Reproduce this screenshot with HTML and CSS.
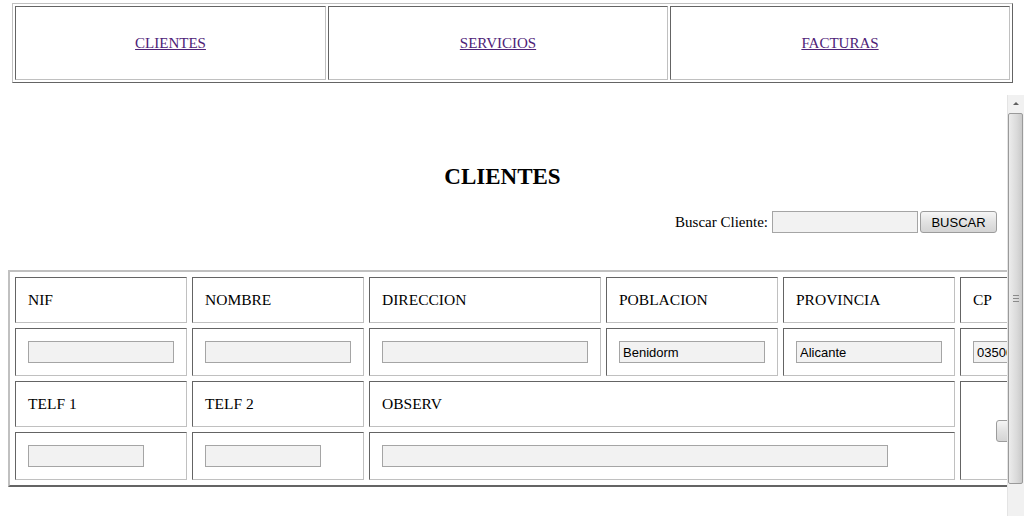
FILE: index.html
```html
<!doctype html>
<html lang="es">
<head>
    <meta charset="UTF-8">
    <title>Clientes</title>
    <link rel="stylesheet" href="styles.css">
</head>
<body>
<div class="menu-wrap">
    <table class="menu">
        <tr>
            <td class="menu-cell menu-first"><a href="#">CLIENTES</a></td>
            <td class="menu-cell"><a href="#">SERVICIOS</a></td>
            <td class="menu-cell"><a href="#">FACTURAS</a></td>
        </tr>
    </table>
</div>

<div class="frame">
    <div class="frame-content">
        <h2 class="title">CLIENTES</h2>

        <form class="search">
            <label for="buscar">Buscar Cliente:</label>
            <input type="text" id="buscar" class="field search-field">
            <input type="button" class="btn btn-buscar" value="BUSCAR">
        </form>

        <table class="data">
            <tr class="row-label">
                <td class="c-small">NIF</td>
                <td class="c-small">NOMBRE</td>
                <td class="c-wide">DIRECCION</td>
                <td class="c-small">POBLACION</td>
                <td class="c-prov">PROVINCIA</td>
                <td class="c-small">CP</td>
            </tr>
            <tr class="row-input">
                <td><input type="text" class="field"></td>
                <td><input type="text" class="field"></td>
                <td><input type="text" class="field field-wide"></td>
                <td><input type="text" class="field" value="Benidorm"></td>
                <td><input type="text" class="field" value="Alicante"></td>
                <td><input type="text" class="field" value="03500"></td>
            </tr>
            <tr class="row-label">
                <td>TELF 1</td>
                <td>TELF 2</td>
                <td colspan="3">OBSERV</td>
                <td rowspan="2" class="c-action"><input type="button" class="btn btn-guardar" value="GUARDAR"></td>
            </tr>
            <tr class="row-input">
                <td><input type="text" class="field field-telf"></td>
                <td><input type="text" class="field field-telf"></td>
                <td colspan="3"><input type="text" class="field field-obs"></td>
            </tr>
        </table>
    </div>

    <div class="scrollbar">
        <div class="sb-up"><span class="sb-arrow"></span></div>
        <div class="sb-thumb"><span class="sb-grip"></span></div>
        <div class="sb-track"></div>
    </div>
</div>
</body>
</html>
```

FILE: styles.css
```css
html, body {
    margin: 0;
    padding: 0;
    background: #fff;
    overflow: hidden;
}

body {
    font-family: "Liberation Serif", "Times New Roman", serif;
    font-size: 15px;
    color: #000;
}

/* menu de arriba */

.menu-wrap {
    padding: 3px 0 0 12px;
}

.menu {
    border-collapse: separate;
    border-spacing: 2px;
    border: 1px solid;
    border-color: #c0c0c0 #646464 #646464 #c0c0c0;
}

.menu-cell {
    box-sizing: border-box;
    width: 340px;
    height: 74px;
    padding: 0;
    text-align: center;
    border: 1px solid;
    border-color: #646464 #c0c0c0 #c0c0c0 #646464;
}

.menu-first {
    width: 311px;
}

.menu-cell a {
    color: #4e2277;
    text-decoration: underline;
}

/* marco de contenido */

.frame {
    display: flex;
    margin-top: 12px;
    height: 421px;
}

.frame-content {
    flex: 1;
    min-width: 0;
    overflow: hidden;
    padding: 0 10px 0 8px;
}

.title {
    margin: 68px 0 0;
    font-size: 23px;
    line-height: 28px;
    text-align: center;
    font-weight: bold;
}

.search {
    display: flex;
    justify-content: flex-end;
    align-items: center;
    margin: 20px 0 0;
    height: 22px;
}

.search label {
    margin-right: 4px;
}

.field {
    box-sizing: border-box;
    width: 146px;
    height: 22px;
    margin: 0;
    padding: 0 3px;
    border: 1px solid #a5a5a5;
    background: #f2f2f2;
    font-family: "Liberation Sans", Arial, sans-serif;
    font-size: 13px;
    color: #000;
    outline: none;
}

.search-field {
    margin-right: 2px;
}

.btn {
    box-sizing: border-box;
    height: 22px;
    margin: 0;
    border: 1px solid #9c9c9c;
    border-radius: 3px;
    background: linear-gradient(#f6f6f6, #e2e2e2 50%, #d4d4d4);
    font-family: "Liberation Sans", Arial, sans-serif;
    font-size: 13px;
    color: #000;
}

.btn-buscar {
    width: 77px;
}

.btn-guardar {
    width: 100px;
    padding-left: 30px;
}

/* tabla de datos */

.data {
    margin-top: 37px;
    border-collapse: separate;
    border-spacing: 5px;
    border: 2px solid;
    border-color: #c0c0c0 #646464 #646464 #c0c0c0;
}

.data td {
    box-sizing: border-box;
    padding: 0 12px;
    border: 1px solid;
    border-color: #646464 #c0c0c0 #c0c0c0 #646464;
    vertical-align: middle;
    white-space: nowrap;
    font-size: 15.5px;
}

.data .c-small {
    width: 172px;
}

.data .c-prov {
    width: 173px;
}

.data .c-wide {
    width: 232px;
}

.data .c-action {
    text-align: center;
}

.row-label td {
    height: 46px;
}

.row-input td {
    height: 48px;
}

.field-wide {
    width: 206px;
}

.field-telf {
    width: 116px;
}

.field-obs {
    width: 506px;
}

/* barra de desplazamiento */

.scrollbar {
    flex: 0 0 17px;
    display: flex;
    flex-direction: column;
    background: #f1f1f1;
    border-left: 1px solid #e4e4e4;
    box-sizing: border-box;
}

.sb-up {
    height: 17px;
    display: flex;
    align-items: center;
    justify-content: center;
}

.sb-arrow {
    width: 0;
    height: 0;
    border-left: 3px solid transparent;
    border-right: 3px solid transparent;
    border-bottom: 3px solid #606060;
}

.sb-thumb {
    height: 369px;
    margin: 1px 1px 0 0;
    border: 1px solid #9a9a9a;
    border-radius: 2px;
    background: linear-gradient(to right, #ececec, #dadada 60%, #c9c9c9);
    display: flex;
    align-items: center;
    justify-content: center;
}

.sb-grip {
    width: 6px;
    height: 5px;
    border-top: 1px solid #8a8a8a;
    border-bottom: 1px solid #8a8a8a;
    background: linear-gradient(transparent 2px, #8a8a8a 2px, #8a8a8a 3px, transparent 3px);
}

.sb-track {
    flex: 1;
}
```
